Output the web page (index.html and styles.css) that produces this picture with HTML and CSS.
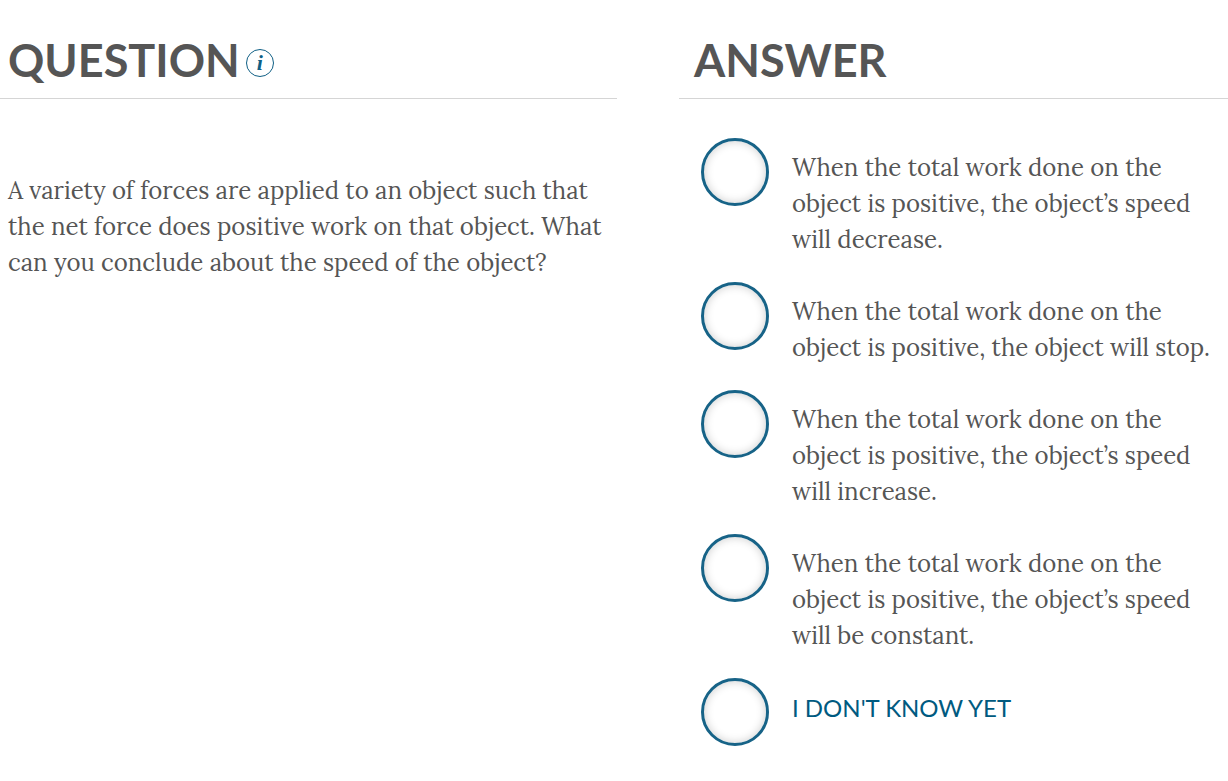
FILE: index.html
```html
<!DOCTYPE html>
<html lang="en">
<head>
  <meta charset="UTF-8">
  <title>Question</title>
  <link rel="stylesheet" href="styles.css">
</head>
<body>
  <main class="quiz">
    <section class="question">
      <h1>QUESTION <button type="button" class="info" aria-label="Question info">i</button></h1>
      <p class="prompt">A variety of forces are applied to an object such that the net force does positive work on that object. What can you conclude about the speed of the object?</p>
    </section>

    <form class="answer">
      <h1>ANSWER</h1>
      <div class="options">
        <label class="option" for="a1">
          <input type="radio" name="answer" id="a1">
          <span>When the total work done on the object is positive, the object’s speed will decrease.</span>
        </label>
        <label class="option" for="a2">
          <input type="radio" name="answer" id="a2">
          <span>When the total work done on the object is positive, the object will stop.</span>
        </label>
        <label class="option" for="a3">
          <input type="radio" name="answer" id="a3">
          <span>When the total work done on the object is positive, the object’s speed will increase.</span>
        </label>
        <label class="option" for="a4">
          <input type="radio" name="answer" id="a4">
          <span>When the total work done on the object is positive, the object’s speed will be constant.</span>
        </label>
        <label class="option unsure" for="a5">
          <input type="radio" name="answer" id="a5">
          <span>I DON'T KNOW YET</span>
        </label>
      </div>
    </form>
  </main>
</body>
</html>
```
FILE: styles.css
```css
* {
  box-sizing: border-box;
}
body {
  margin: 0;
  background: #fff;
  color: #555;
  font-family: Lora, "Liberation Serif", serif;
  font-size: 24px;
  line-height: 36px;
}
.quiz {
  display: grid;
  grid-template-columns: 617fr 549fr;
  column-gap: 62px;
  padding-top: 24px;
}
h1 {
  display: flex;
  align-items: center;
  gap: 6px;
  height: 75px;
  margin: 0;
  padding: 0 8px 2px;
  border-bottom: 1px solid #d5d5d5;
  font-family: Lato, sans-serif;
  font-size: 45px;
  font-weight: 700;
}
.info {
  width: 28px;
  height: 28px;
  margin-top: 5px;
  padding: 0;
  border: 1px solid #0f5f85;
  border-radius: 50%;
  background: none;
  color: #0f5f85;
  font: italic bold 22px/26px "Liberation Serif", serif;
  cursor: pointer;
}
.prompt {
  margin: 74px 0 0;
  padding: 0 8px;
}
.answer h1 {
  padding-left: 15px;
}
.options {
  padding: 39px 16px 0 22px;
}
.option {
  display: flex;
  align-items: flex-start;
  gap: 23px;
  cursor: pointer;
}
.option input {
  appearance: none;
  flex: none;
  width: 68px;
  height: 68px;
  margin: 0;
  border: 3px solid #176387;
  border-radius: 50%;
  background: #fff;
  box-shadow: inset 0 0 10px rgba(0, 0, 0, 0.2);
  cursor: pointer;
}
.option input:checked {
  background: #176387;
}
.option span {
  padding: 12px 0 24px;
}
.unsure {
  color: #005a80;
  font-family: Lato, sans-serif;
}
```
